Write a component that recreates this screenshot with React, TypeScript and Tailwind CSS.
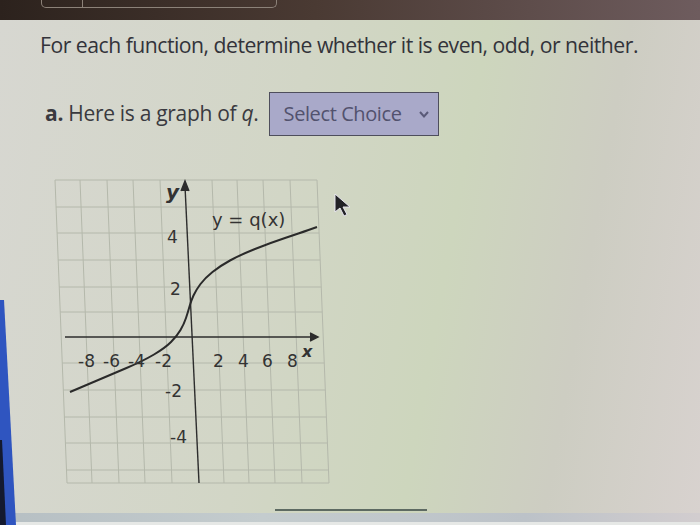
const vLines = [55, 80, 107, 133, 160, 212, 237, 263, 290, 317];
const hLines = [180, 207, 233, 260, 287, 312, 363, 390, 417, 443, 470, 483];

const curve: [number, number][] = [
  [70, 392], [110, 375], [143, 361], [165, 348], [177, 336], [184, 324], [188, 312],
  [191, 301], [196, 290], [205, 278], [220, 266], [240, 255], [270, 243], [300, 233], [317, 227],
];

const xLabels: [string, number][] = [
  ["-8", 78], ["-6", 103], ["-4", 128], ["-2", 155], ["2", 213], ["4", 238], ["6", 262], ["8", 287],
];

function toPath(pts: [number, number][]) {
  let d = `M${pts[0][0]},${pts[0][1]}`;
  for (let i = 1; i < pts.length; i++) {
    const [x0, y0] = pts[i - 1];
    const [x1, y1] = pts[i];
    d += ` Q${x0},${y0} ${(x0 + x1) / 2},${(y0 + y1) / 2}`;
    if (i === pts.length - 1) d += ` L${x1},${y1}`;
  }
  return d;
}

// graph drawn in page coordinates, so the viewBox starts where the svg sits
function Graph() {
  const slant = (y: number) => ((y - 180) / 303) * 12;
  return (
    <svg width="300" height="320" viewBox="50 176 300 320" className="block">
      <g stroke="#b4b8ab" strokeWidth="1">
        {vLines.map((x) => (
          <line key={x} x1={x} y1={180} x2={x + slant(483)} y2={483} />
        ))}
        {hLines.map((y) => (
          <line key={y} x1={55 + slant(y)} y1={y} x2={317 + slant(y)} y2={y} />
        ))}
      </g>
      <g stroke="#2d2d2d" strokeWidth="1.4" fill="none">
        <line x1={65} y1={337} x2={316} y2={337} />
        <path d="M310,333 L318,337 L310,341" fill="#2d2d2d" />
        <line x1={185} y1={186} x2={199} y2={483} />
        <path d="M181,191 L185,181 L189,191" fill="#2d2d2d" />
      </g>
      <path d={toPath(curve)} stroke="#2a2a2a" strokeWidth="2" fill="none" />
      <g fill="#333" style={{ fontFamily: '"DejaVu Sans", sans-serif' }} fontSize="17">
        <text x="166" y="199" fontStyle="italic" fontWeight="bold" fontSize="20">y</text>
        <text x="212" y="226" fontSize="18">y = q(x)</text>
        <text x="167" y="243">4</text>
        <text x="170" y="295">2</text>
        <text x="165" y="397">-2</text>
        <text x="170" y="443">-4</text>
        {xLabels.map(([t, x]) => (
          <text key={t} x={x} y="367">{t}</text>
        ))}
        <text x="302" y="357" fontStyle="italic" fontWeight="bold" fontSize="16">x</text>
      </g>
    </svg>
  );
}

export default function App() {
  return (
    <div
      className="relative flex h-[525px] w-[700px] flex-col overflow-hidden"
      style={{ fontFamily: '"Open Sans", Lato, sans-serif' }}
    >
      {/* monitor bezel */}
      <div className="flex h-[20px] items-start bg-[linear-gradient(90deg,#2c221d_0%,#4a3a33_45%,#6e5c5e_100%)] pl-[41px]">
        <div className="flex h-[8px] w-[236px] rounded-b-[5px] border-x border-b border-[#8c8279]">
          <div className="w-[41px] border-r border-[#8c8279]" />
        </div>
      </div>

      {/* screen */}
      <div className="relative flex flex-1 flex-col bg-[linear-gradient(100deg,#d7d7d1_0%,#d2d6c6_40%,#cdd6bd_62%,#cdcdc2_80%,#d8d2cf_100%)]">
        <div className="flex flex-1 flex-col pl-[40px] pt-[11px]">
          <h1 className="text-[21.2px] leading-[28px] tracking-[-0.5px] text-[#33333a]">
            For each function, determine whether it is even, odd, or neither.
          </h1>

          <div className="mt-[33px] flex items-center gap-[10px] pl-[5px]">
            <span className="text-[21px] tracking-[-0.3px] text-[#3a3a40]">
              <span className="font-bold">a.</span> Here is a graph of <i>q</i>.
            </span>
            <div className="flex h-[44px] w-[170px] items-center justify-between border border-[#4e4e5c] bg-[#a9a9c9] pl-[14px] pr-[8px]">
              <span className="text-[20px] tracking-[-0.4px] text-[#52526e]">Select Choice</span>
              <svg width="12" height="9" viewBox="0 0 12 9">
                <path d="M2,2 L6,6.5 L10,2" stroke="#5a5a78" strokeWidth="2" fill="none" />
              </svg>
            </div>
          </div>

          <div className="mt-[40px] pl-[10px]">
            <Graph />
          </div>
        </div>

        {/* bottom ledge of the screen */}
        <div className="ml-[275px] h-[2px] w-[152px] bg-[#5d6a62]" />
        <div className="mt-[2px] h-[9px] bg-[linear-gradient(90deg,#b6bfc3,#c4ccce,#bcc2c8_75%,#d2cdcf)]" />
        <div className="h-[3px] bg-[#e6e8e6]" />

        {/* mouse pointer */}
        <svg className="absolute left-[331px] top-[172px]" width="24" height="26" viewBox="0 0 24 26">
          <path d="M4,2 L4,20 L9,16 L13,24 L16,22.5 L12,15 L19,15 Z" fill="#222226" stroke="#e8e6f0" strokeWidth="1" />
        </svg>

        {/* blue edge of the photo */}
        <div className="absolute bottom-0 left-0 h-[225px] w-[18px] bg-[#2f55c0] [clip-path:polygon(0_0,4px_0,16px_100%,0_100%)]" />
        <div className="absolute bottom-0 left-0 h-[85px] w-[6px] bg-[#141a30] [clip-path:polygon(0_0,2px_0,6px_100%,0_100%)]" />
      </div>
    </div>
  );
}
